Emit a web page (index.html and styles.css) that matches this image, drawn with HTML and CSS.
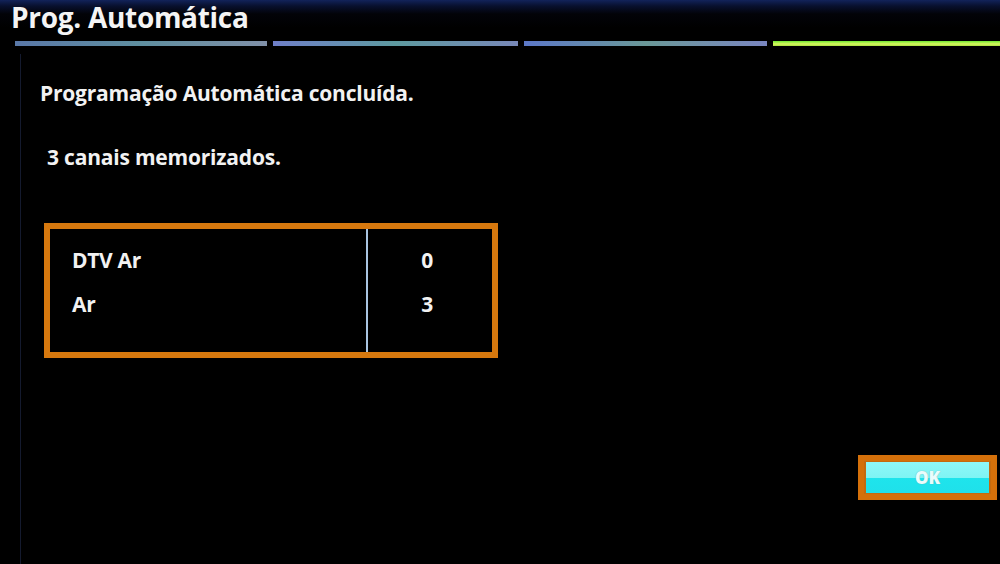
FILE: index.html
```html
<!DOCTYPE html>
<html lang="pt">
<head>
<meta charset="utf-8">
<title>Prog. Automática</title>
<link rel="stylesheet" href="styles.css">
</head>
<body>
<div class="screen">
  <header class="header">
    <h1 class="title">Prog. Automática</h1>
  </header>
  <div class="steps">
    <div class="step step-1"></div>
    <div class="step step-2"></div>
    <div class="step step-3"></div>
    <div class="step step-4"></div>
  </div>
  <main class="panel">
    <div class="content">
      <p class="msg msg-done">Programação Automática concluída.</p>
      <p class="msg msg-count">3 canais memorizados.</p>
      <div class="result">
        <div class="result-names">
          <div class="row">DTV Ar</div>
          <div class="row">Ar</div>
        </div>
        <div class="result-values">
          <div class="row">0</div>
          <div class="row">3</div>
        </div>
      </div>
    </div>
    <div class="actions">
      <div class="ok-focus"><button class="ok-btn">OK</button></div>
    </div>
  </main>
</div>
</body>
</html>
```

FILE: styles.css
```css
* { box-sizing: border-box; }
html, body {
  margin: 0;
  padding: 0;
  width: 1000px;
  height: 564px;
  overflow: hidden;
  background: #000;
}
.screen {
  width: 1000px;
  height: 564px;
  display: flex;
  flex-direction: column;
  background: linear-gradient(180deg, #12235a 0px, #08102e 6px, #020308 14px, #000 28px);
  font-family: "Open Sans", "DejaVu Sans", sans-serif;
  color: #f2f2f2;
}
.header {
  height: 40px;
  padding-left: 11px;
}
.title {
  margin: 0;
  font-size: 28px;
  font-weight: 700;
  line-height: 34px;
  letter-spacing: -0.3px;
  color: #f4f4f4;
}
.steps {
  display: flex;
  gap: 6px;
  padding-left: 15px;
  height: 5px;
  margin-top: 1px;
}
.step { height: 5px; }
.step-1 { width: 252px; background: linear-gradient(90deg, #5a78a8, #5f8fa0 50%, #8090a8); }
.step-2 { width: 245px; background: linear-gradient(90deg, #6f7fc8, #5e9aa0 50%, #7888b8); }
.step-3 { width: 243px; background: linear-gradient(90deg, #5c78c8, #6a9898 50%, #7a86c0); }
.step-4 { flex: 1; background: linear-gradient(180deg, #6ee830, #d8f860 60%, #a8e040); }
.panel {
  flex: 1;
  margin-left: 20px;
  margin-top: 8px;
  border-left: 1px solid #141a2e;
  display: flex;
  flex-direction: column;
}
.content {
  flex: 1;
  padding-left: 19px;
}
.msg {
  margin: 0;
  font-size: 21px;
  font-weight: 700;
  line-height: 28px;
  color: #f2f2f2;
}
.msg-done { margin-top: 25px; letter-spacing: -0.2px; }
.msg-count { margin-top: 36px; padding-left: 7px; letter-spacing: -0.2px; }
.result {
  margin-top: 52px;
  margin-left: 4px;
  width: 454px;
  height: 135px;
  border: 6px solid #d6780e;
  background: #000;
  display: flex;
}
.result-names {
  width: 318px;
  padding-left: 22px;
  padding-top: 9px;
  border-right: 2px solid #a9c4e0;
}
.result-values {
  flex: 1;
  text-align: center;
  padding-top: 9px;
  padding-right: 6px;
}
.row {
  font-size: 21px;
  font-weight: 700;
  line-height: 44px;
  height: 44px;
  letter-spacing: -0.3px;
  color: #f2f2f2;
}
.actions {
  display: flex;
  justify-content: flex-end;
  padding-right: 3px;
  padding-bottom: 64px;
}
.ok-focus {
  width: 139px;
  height: 45px;
  border: 6px solid #d4700a;
  padding: 1px 2px;
  background: #c46a10;
}
.ok-btn {
  width: 100%;
  height: 100%;
  border: 0;
  padding: 0;
  background: linear-gradient(180deg, #8ef8f8 0%, #7ff4f4 50%, #1ee4ec 52%, #20e0ea 100%);
  color: #eafcfc;
  font-family: "Open Sans", "DejaVu Sans", sans-serif;
  font-weight: 800;
  font-size: 17px;
  text-shadow: 0 0 1px #5aa;
}
```
